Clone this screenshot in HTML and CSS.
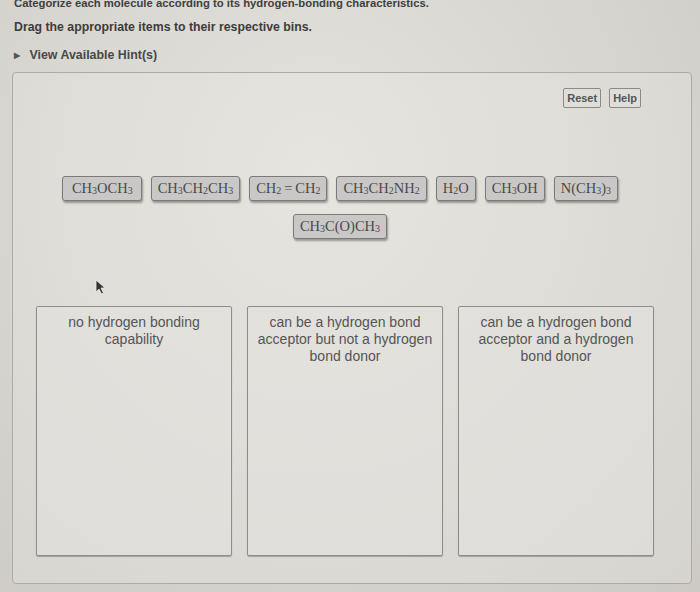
FILE: index.html
```html
<!DOCTYPE html>
<html>
<head>
    <title>Hydrogen Bonding Sort</title>
    <link rel="stylesheet" href="styles.css">
</head>
<body>
    <div class="intro">
        <p class="prompt">Categorize each molecule according to its hydrogen-bonding characteristics.</p>
        <p class="instructions">Drag the appropriate items to their respective bins.</p>
        <p class="hints"><span class="caret">&#9654;</span> View Available Hint(s)</p>
    </div>
    <div class="panel">
        <div class="toolbar">
            <button class="tool-btn">Reset</button>
            <button class="tool-btn">Help</button>
        </div>
        <div class="tokens">
            <div class="token wide">CH<sub>3</sub>OCH<sub>3</sub></div>
            <div class="token">CH<sub>3</sub>CH<sub>2</sub>CH<sub>3</sub></div>
            <div class="token">CH<sub>2</sub>&thinsp;=&thinsp;CH<sub>2</sub></div>
            <div class="token">CH<sub>3</sub>CH<sub>2</sub>NH<sub>2</sub></div>
            <div class="token">H<sub>2</sub>O</div>
            <div class="token">CH<sub>3</sub>OH</div>
            <div class="token">N(CH<sub>3</sub>)<sub>3</sub></div>
            <div class="token">CH<sub>3</sub>C(O)CH<sub>3</sub></div>
        </div>
        <div class="pointer">
            <svg width="12" height="16" viewBox="0 0 12 16">
                <path d="M1 1 L1 13 L4 10 L6.5 15 L8.5 14 L6 9 L10 9 Z" fill="#333" stroke="#eee" stroke-width="0.8"/>
            </svg>
        </div>
        <div class="bins">
            <div class="bin">no hydrogen bonding capability</div>
            <div class="bin">can be a hydrogen bond acceptor but not a hydrogen bond donor</div>
            <div class="bin">can be a hydrogen bond acceptor and a hydrogen bond donor</div>
        </div>
    </div>
</body>
</html>
```

FILE: styles.css
```css
body {
    margin: 0;
    height: 592px;
    overflow: hidden;
    font-family: "Liberation Sans", Arial, sans-serif;
    color: #3a3a3a;
    background: radial-gradient(ellipse at 45% 30%, #e4e2dc 0%, #dad8d3 45%, #cdcac5 100%);
}
.intro {
    padding-left: 14px;
    margin-top: -5px;
}
.intro p {
    margin: 0;
    font-weight: bold;
    line-height: 16px;
}
.prompt {
    font-size: 11.3px;
    color: #404040;
}
.instructions {
    font-size: 12.3px;
    margin-top: 8px !important;
    color: #3c3c3c;
}
.hints {
    font-size: 12.4px;
    margin-top: 12px !important;
    color: #484848;
}
.caret {
    font-size: 8px;
    color: #555;
    margin-right: 6px;
    vertical-align: 1px;
}
.panel {
    margin: 8px 8px 0 12px;
    height: 512px;
    border: 1px solid #aeaba6;
    border-radius: 4px;
    background: rgba(236, 234, 229, 0.3);
    box-sizing: border-box;
}
.toolbar {
    display: flex;
    justify-content: flex-end;
    gap: 8px;
    padding: 15px 50px 0 0;
}
.tool-btn {
    font-family: "Liberation Sans", Arial, sans-serif;
    font-size: 11px;
    font-weight: bold;
    color: #555;
    background: #e0ded9;
    border: 1px solid #8c8a87;
    border-radius: 2px;
    padding: 2px 3px;
    height: 20px;
}
.tokens {
    display: flex;
    flex-wrap: wrap;
    justify-content: center;
    gap: 13px 9px;
    margin-top: 68px;
    padding: 0 54px 0 30px;
}
.token {
    font-family: "Liberation Serif", "Times New Roman", serif;
    font-size: 14.5px;
    color: #4a4a4a;
    background: #c9c8c6;
    border: 1px solid #7b7a78;
    border-radius: 3px;
    box-shadow: 1px 2px 2px rgba(60, 60, 60, 0.45);
    padding: 0 6px;
    height: 23px;
    line-height: 23px;
}
.token.wide {
    padding: 0 8px 0 9px;
}
.token sub {
    font-size: 10px;
    vertical-align: -1px;
}
.pointer {
    height: 40px;
    padding: 40px 0 0 82px;
    box-sizing: border-box;
}
.bins {
    display: flex;
    gap: 15px;
    margin-top: 27px;
    padding-left: 23px;
}
.bin {
    width: 196px;
    height: 250px;
    box-sizing: border-box;
    border: 1px solid #8f8d8a;
    border-radius: 2px;
    box-shadow: 0 1px 1px rgba(80, 80, 80, 0.4);
    background: rgba(228, 226, 222, 0.55);
    padding: 7px 8px 0;
    text-align: center;
    font-size: 14px;
    line-height: 17px;
    color: #555;
}
```
